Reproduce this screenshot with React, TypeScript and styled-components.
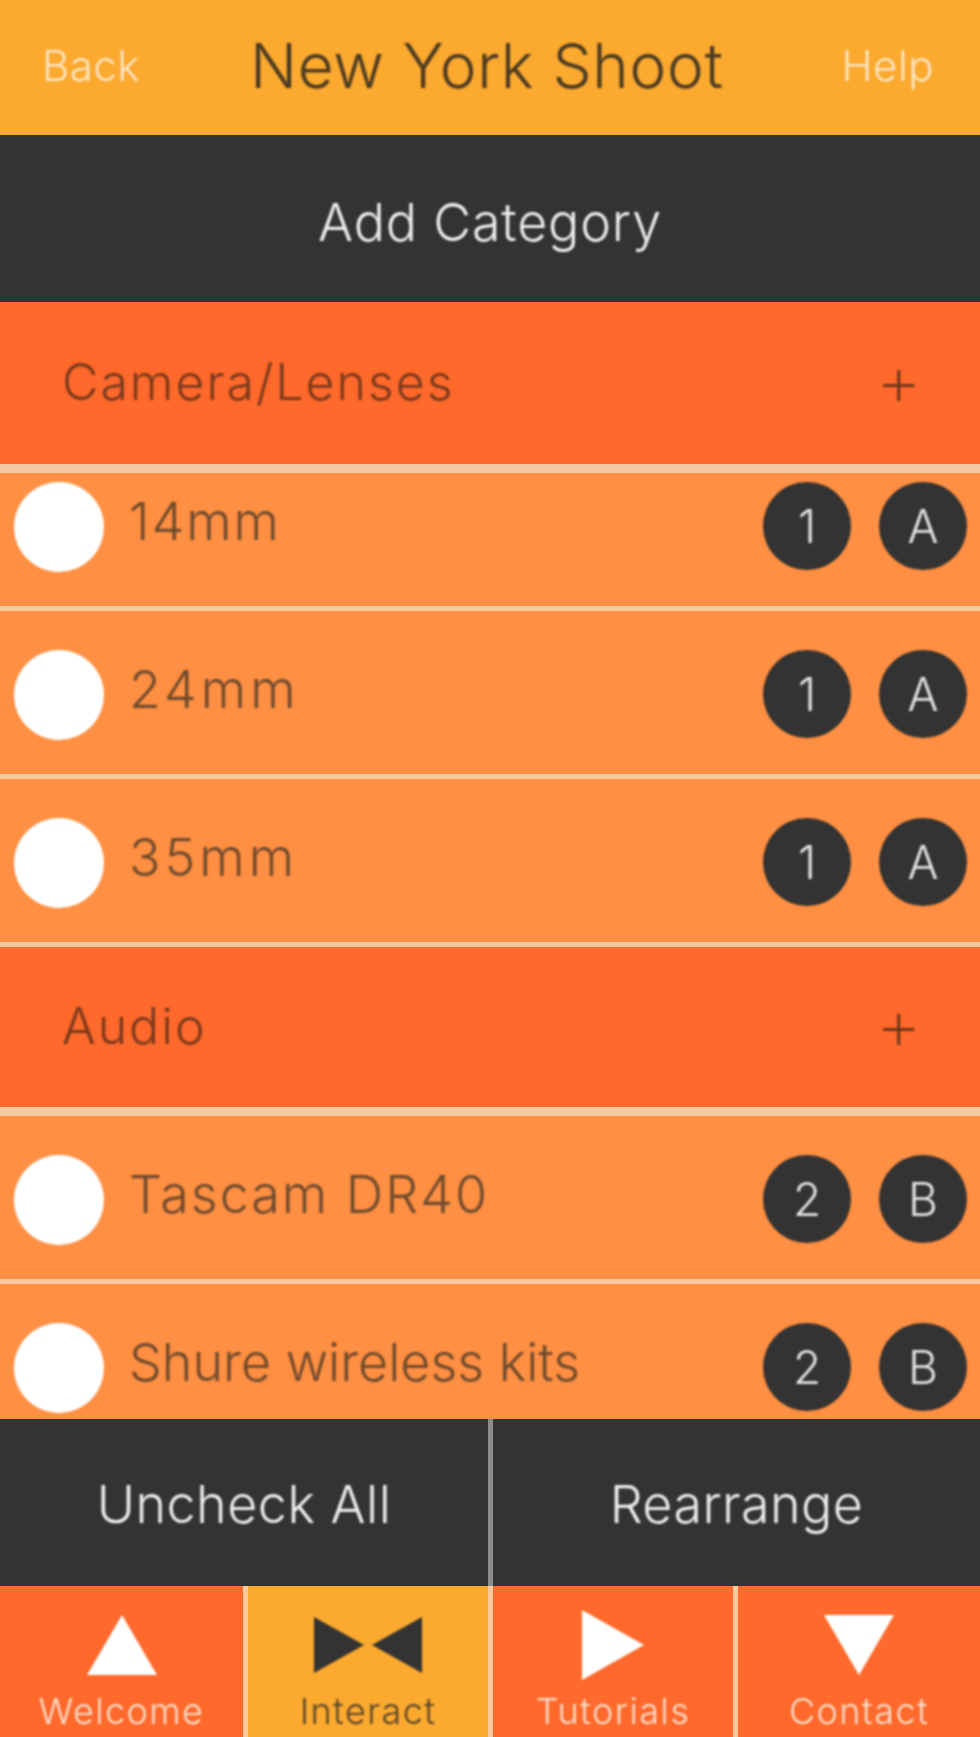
import React from "react";
import styled, { createGlobalStyle, css } from "styled-components";

const GlobalStyle = createGlobalStyle`
  * {
    box-sizing: border-box;
  }
  html, body {
    margin: 0;
    padding: 0;
    background: #ff6a2b;
  }
  body {
    font-family: "Inter", "Noto Sans", sans-serif;
    font-weight: 300;
  }
`;

// the reference is an upscaled phone capture, everything drawn on the bars is a bit soft
const soft = css`
  filter: blur(0.8px);
`;

type Item = {
  name: string;
  num: string;
  letter: string;
  height: number;
  pad: number;
  track: number;
};

const cameraItems: Item[] = [
  { name: "14mm", num: "1", letter: "A", height: 138, pad: 9, track: 2 },
  { name: "24mm", num: "1", letter: "A", height: 168, pad: 39, track: 4 },
  { name: "35mm", num: "1", letter: "A", height: 168, pad: 39, track: 4 },
];

const audioItems: Item[] = [
  { name: "Tascam DR40", num: "2", letter: "B", height: 168, pad: 39, track: 2 },
  { name: "Shure wireless kits", num: "2", letter: "B", height: 135, pad: 39, track: 0 },
];

function ListRow({ item, last }: { item: Item; last?: boolean }) {
  return (
    <Row $height={item.height} $pad={item.pad} $last={last}>
      <Check />
      <RowName $track={item.track}>{item.name}</RowName>
      <Badge>{item.num}</Badge>
      <Badge>{item.letter}</Badge>
    </Row>
  );
}

export default function App() {
  return (
    <Page>
      <GlobalStyle />
      <Header>
        <HeaderLink>Back</HeaderLink>
        <Title>New York Shoot</Title>
        <HeaderLink>Help</HeaderLink>
      </Header>
      <AddBar>
        <BarText $track={0.8}>Add Category</BarText>
      </AddBar>

      <Category $height={171}>
        <CategoryName>Camera/Lenses</CategoryName>
        <Plus>+</Plus>
      </Category>
      {cameraItems.map((item) => (
        <ListRow key={item.name} item={item} />
      ))}

      <Category $height={169}>
        <CategoryName>Audio</CategoryName>
        <Plus>+</Plus>
      </Category>
      {audioItems.map((item, i) => (
        <ListRow key={item.name} item={item} last={i === audioItems.length - 1} />
      ))}

      <ActionBar>
        <Action>
          <BarText $track={0.5}>Uncheck All</BarText>
        </Action>
        <Action>
          <BarText $track={0.4}>Rearrange</BarText>
        </Action>
      </ActionBar>

      <Tabs>
        <Tab>
          <IconSlot>
            <TabIcon width="70" height="60" viewBox="0 0 70 60">
              <polygon points="35,0 70,60 0,60" fill="#fff" />
            </TabIcon>
          </IconSlot>
          <TabLabel>Welcome</TabLabel>
        </Tab>
        <Tab $active>
          <IconSlot>
            <TabIcon width="108" height="60" viewBox="0 0 108 60">
              <polygon points="0,2 50,30 0,58" fill="#333" />
              <polygon points="108,2 58,30 108,58" fill="#333" />
            </TabIcon>
          </IconSlot>
          <TabLabel $active>Interact</TabLabel>
        </Tab>
        <Tab>
          <IconSlot>
            <TabIcon width="62" height="70" viewBox="0 0 62 70">
              <polygon points="0,0 62,35 0,70" fill="#fff" />
            </TabIcon>
          </IconSlot>
          <TabLabel>Tutorials</TabLabel>
        </Tab>
        <Tab $last>
          <IconSlot>
            <TabIcon width="70" height="60" viewBox="0 0 70 60">
              <polygon points="0,0 70,0 35,60" fill="#fff" />
            </TabIcon>
          </IconSlot>
          <TabLabel>Contact</TabLabel>
        </Tab>
      </Tabs>
    </Page>
  );
}

const Page = styled.div`
  width: 980px;
  height: 1737px;
  overflow: hidden;
  display: flex;
  flex-direction: column;
  background: #ff8f42;
`;

const Header = styled.header`
  height: 135px;
  flex: none;
  display: flex;
  align-items: center;
  justify-content: space-between;
  padding: 0 46px 4px 42px;
  background: #fba92f;
`;

const HeaderLink = styled.span`
  ${soft}
  font-size: 42px;
  letter-spacing: 0.5px;
  color: #fce6c4;
`;

const Title = styled.h1`
  ${soft}
  margin: 0 8px 0 0;
  font-size: 62px;
  font-weight: 300;
  letter-spacing: 0.7px;
  color: #4a3a22;
`;

const AddBar = styled.div`
  height: 167px;
  flex: none;
  display: flex;
  align-items: center;
  justify-content: center;
  padding-top: 8px;
  background: #333333;
`;

const BarText = styled.span<{ $track: number }>`
  ${soft}
  color: #ededed;
  font-size: 52px;
  letter-spacing: ${(p) => p.$track}px;
`;

const Category = styled.div<{ $height: number }>`
  height: ${(p) => p.$height}px;
  flex: none;
  display: flex;
  align-items: center;
  justify-content: space-between;
  padding: 0 58px 0 62px;
  background: #ff692b;
  border-bottom: 9px solid #f3c9a3;
`;

const CategoryName = styled.span`
  ${soft}
  font-size: 50px;
  letter-spacing: 2px;
  margin-bottom: 3px;
  color: #76391c;
`;

const Plus = styled.span`
  ${soft}
  font-size: 72px;
  font-weight: 200;
  line-height: 1;
  margin-bottom: 6px;
  color: #6d3519;
`;

const Row = styled.div<{ $height: number; $pad: number; $last?: boolean }>`
  height: ${(p) => p.$height}px;
  flex: none;
  display: flex;
  align-items: flex-start;
  gap: 25px;
  padding: ${(p) => p.$pad}px 13px 0 14px;
  background: #ff8f42;
  border-bottom: ${(p) => (p.$last ? "none" : "5px solid #f9c9a0")};
`;

const Check = styled.div`
  ${soft}
  width: 90px;
  height: 90px;
  flex: none;
  border-radius: 50%;
  background: #ffffff;
`;

const RowName = styled.span<{ $track: number }>`
  ${soft}
  flex: 1;
  font-size: 52px;
  line-height: 80px;
  letter-spacing: ${(p) => p.$track}px;
  color: #6e4a2c;
`;

const Badge = styled.div`
  ${soft}
  width: 88px;
  height: 88px;
  flex: none;
  margin-left: 3px;
  border-radius: 50%;
  display: flex;
  align-items: center;
  justify-content: center;
  background: #333333;
  color: #e4e4e4;
  font-size: 46px;
`;

const ActionBar = styled.div`
  height: 167px;
  flex: none;
  display: grid;
  grid-template-columns: 488px 1fr;
  background: #333333;
`;

const Action = styled.div`
  display: flex;
  align-items: center;
  justify-content: center;
  padding-top: 4px;
  & + & {
    border-left: 5px solid #8c8c8c;
  }
`;

const Tabs = styled.nav`
  height: 151px;
  flex: none;
  display: grid;
  grid-template-columns: 248px 245px 245px 242px;
  background: #ff692b;
`;

const Tab = styled.div<{ $active?: boolean; $last?: boolean }>`
  display: flex;
  flex-direction: column;
  align-items: center;
  padding-top: 24px;
  gap: 9px;
  background: ${(p) => (p.$active ? "#fba92f" : "#ff692b")};
  border-right: ${(p) => (p.$last ? "none" : "5px solid #f9c9a0")};
`;

const IconSlot = styled.div`
  height: 70px;
  flex: none;
  display: flex;
  align-items: center;
`;

const TabIcon = styled.svg`
  ${soft}
  display: block;
`;

const TabLabel = styled.span<{ $active?: boolean }>`
  ${soft}
  font-size: 36px;
  line-height: 44px;
  letter-spacing: 1.4px;
  white-space: nowrap;
  color: ${(p) => (p.$active ? "#5a4526" : "#fbe0cc")};
`;
